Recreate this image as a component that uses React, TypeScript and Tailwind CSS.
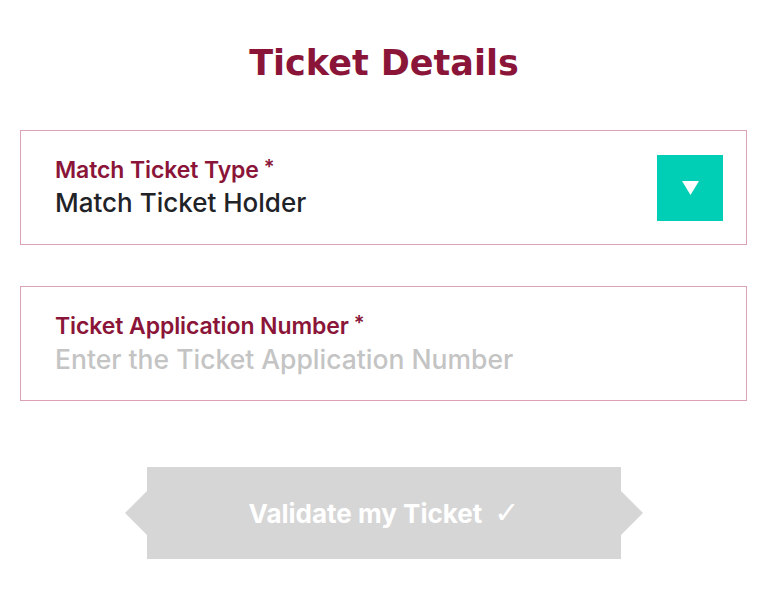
import { useState } from "react";

function Field({
  label,
  children,
  right,
}: {
  label: string;
  children: React.ReactNode;
  right?: React.ReactNode;
}) {
  return (
    <div className="ml-[20px] flex h-[115px] w-[727px] items-center justify-between border border-[#dba2b4] pr-[23px] pl-[34px]">
      <div className="flex flex-col">
        <span className="text-[23px] leading-[28px] font-semibold tracking-[-0.1px] text-[#8a1538]">
          {label}
          <span className="relative -top-[4px] ml-[5px] text-[20px]">*</span>
        </span>
        <div className="mt-[2px]">{children}</div>
      </div>
      {right}
    </div>
  );
}

export default function App() {
  const [ticketNumber, setTicketNumber] = useState("");

  return (
    <div className="flex min-h-[595px] flex-col bg-white font-['Inter',sans-serif]">
      {/* Title */}
      <h1 className="pt-[41px] text-center font-['DejaVu_Sans',sans-serif] text-[35px] leading-[44px] font-bold text-[#8a1538]">
        Ticket Details
      </h1>

      {/* Ticket type */}
      <div className="mt-[45px]">
        <Field
          label="Match Ticket Type"
          right={
            <button
              type="button"
              className="flex h-[66px] w-[66px] items-center justify-center bg-[#00cfb5]"
            >
              <svg width="17" height="14" viewBox="0 0 17 14">
                <path d="M0 0 H17 L8.5 14 Z" fill="white" />
              </svg>
            </button>
          }
        >
          <span className="text-[26px] leading-[32px] font-medium text-[#1f2328]">
            Match Ticket Holder
          </span>
        </Field>
      </div>

      {/* Application number */}
      <div className="mt-[41px]">
        <Field label="Ticket Application Number">
          <input
            value={ticketNumber}
            onChange={(e) => setTicketNumber(e.target.value)}
            placeholder="Enter the Ticket Application Number"
            className="block w-[620px] bg-transparent text-[26.5px] leading-[32px] font-medium text-[#1f2328] outline-none placeholder:text-[#c4c4c4]"
          />
        </Field>
      </div>

      {/* Submit */}
      <div className="mt-[66px] flex justify-center">
        <div className="flex items-center">
          <div className="h-[44px] w-[22px] bg-[#d6d6d6] [clip-path:polygon(100%_0,0_50%,100%_100%)]" />
          <button
            type="button"
            disabled
            className="flex h-[92px] w-[474px] items-center justify-center gap-[12px] bg-[#d6d6d6] text-[26px] font-bold text-white"
          >
            Validate my Ticket
            <span className="font-['DejaVu_Sans',sans-serif] text-[30px] leading-none font-normal">✓</span>
          </button>
          <div className="h-[44px] w-[22px] bg-[#d6d6d6] [clip-path:polygon(0_0,100%_50%,0_100%)]" />
        </div>
      </div>
    </div>
  );
}
